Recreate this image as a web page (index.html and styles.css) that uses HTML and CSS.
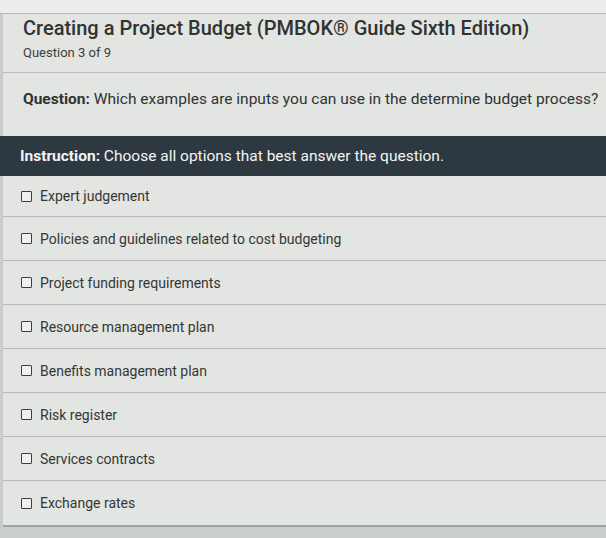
FILE: index.html
```html
<!DOCTYPE html>
<html>
<head>
<meta charset="utf-8">
<link rel="stylesheet" href="styles.css">
</head>
<body>
<div class="topstrip"></div>
<div class="card">
  <header class="head">
    <h1 class="title">Creating a Project Budget (PMBOK® Guide Sixth Edition)</h1>
    <div class="count">Question 3 of 9</div>
  </header>
  <div class="question"><b>Question:</b> Which examples are inputs you can use in the determine budget process?</div>
  <div class="instruction"><span><b>Instruction:</b> Choose all options that best answer the question.</span></div>
  <ul class="options">
    <li class="opt first"><span class="box"></span><span>Expert judgement</span></li>
    <li class="opt"><span class="box"></span><span>Policies and guidelines related to cost budgeting</span></li>
    <li class="opt"><span class="box"></span><span>Project funding requirements</span></li>
    <li class="opt"><span class="box"></span><span>Resource management plan</span></li>
    <li class="opt"><span class="box"></span><span>Benefits management plan</span></li>
    <li class="opt"><span class="box"></span><span>Risk register</span></li>
    <li class="opt"><span class="box"></span><span>Services contracts</span></li>
    <li class="opt"><span class="box"></span><span>Exchange rates</span></li>
  </ul>
</div>
<div class="footer"></div>
</body>
</html>
```
FILE: styles.css
```css
html, body {
  margin: 0;
  padding: 0;
  background: #e3e5e2;
  font-family: Roboto, "Liberation Sans", sans-serif;
  color: #333735;
}
.topstrip {
  height: 13px;
  background: #eceeeb;
  border-bottom: 1px solid #b9bcba;
}
.card {
  border-left: 3px solid #c9ccca;
}
.head {
  padding: 2px 0 0 20px;
  height: 56px;
  border-bottom: 1px solid #b9bcba;
}
.title {
  margin: 0;
  font-size: 20px;
  line-height: 24px;
  font-weight: 500;
  color: #2f3331;
  white-space: nowrap;
}
.count {
  margin-top: 5px;
  font-size: 13px;
  line-height: 15px;
  color: #3a3e3c;
}
.question {
  padding: 16px 0 0 20px;
  height: 47px;
  font-size: 15.5px;
  line-height: 20px;
  color: #2f3331;
  white-space: nowrap;
}
.question b { font-weight: 700; }
.instruction {
  background: #2e3841;
  color: #f2f4f5;
  height: 40px;
  display: flex;
  align-items: center;
  padding-left: 20px;
  margin-left: -3px;
  font-size: 15.5px;
  white-space: nowrap;
}
.instruction b { font-weight: 700; }
.options {
  list-style: none;
  margin: 0;
  padding: 0;
}
.opt {
  height: 43px;
  display: flex;
  align-items: center;
  gap: 8px;
  padding-left: 18px;
  font-size: 14px;
  color: #333735;
  border-bottom: 1px solid #b6b9b7;
}
.opt.first { height: 40px; }
.opt:last-child {
  height: 44px;
  border-bottom: 2px solid #9ea3a4;
}
.box {
  width: 9px;
  height: 9px;
  border: 1.5px solid #3c3f3e;
  border-radius: 1px;
  background: #f0f1ef;
  flex: none;
}
.footer {
  height: 20px;
  background: #c9cdce;
}
```
